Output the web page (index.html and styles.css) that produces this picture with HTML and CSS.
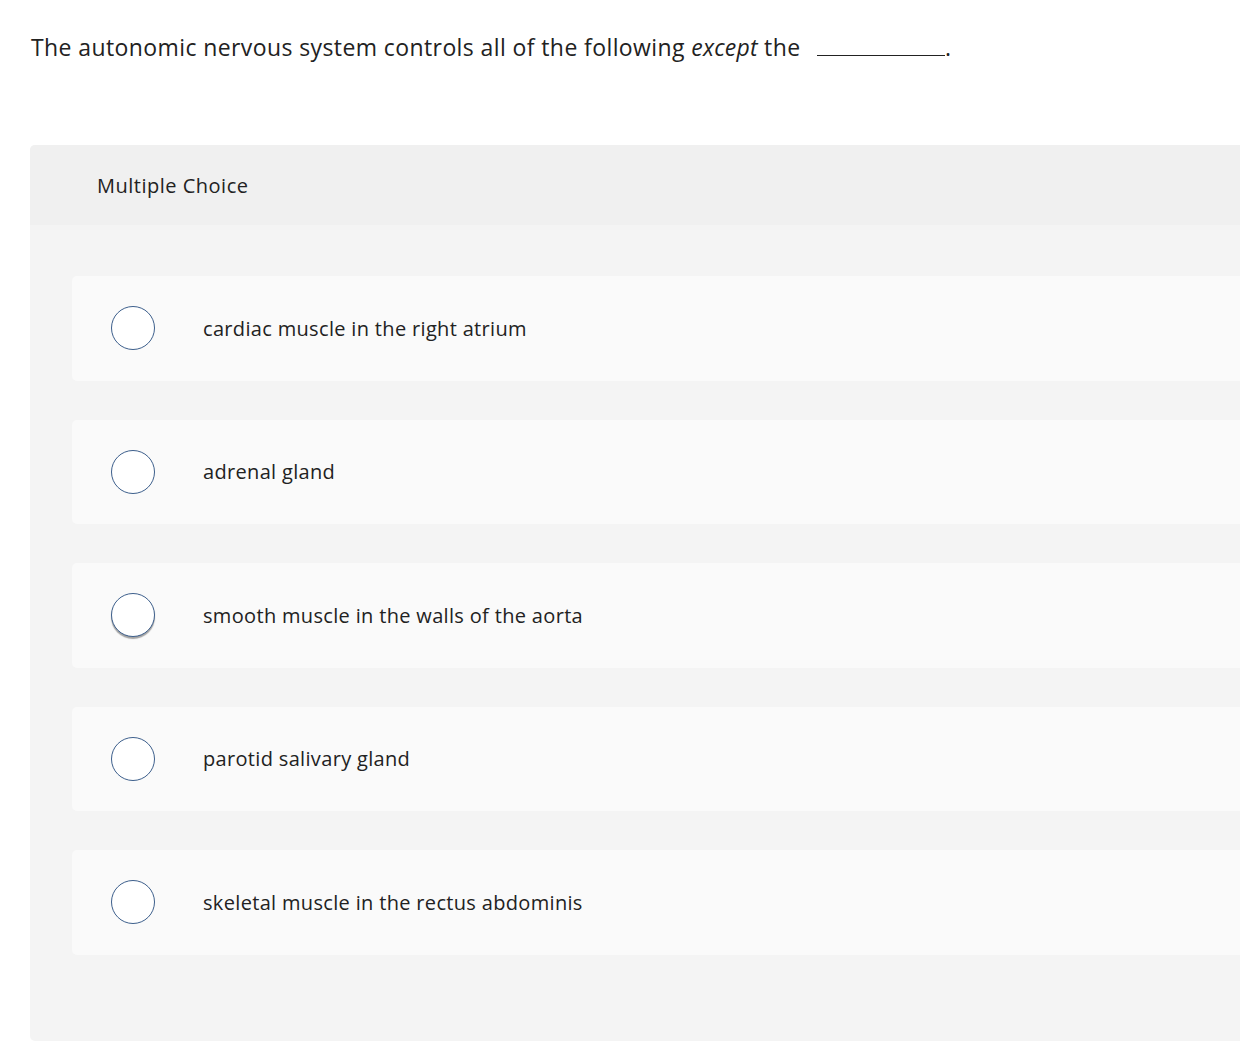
FILE: index.html
```html
<!DOCTYPE html>
<html>

<head>
    <meta charset="UTF-8">
    <meta name="viewport" content="width=device-width, initial-scale=1.0">
    <link rel="stylesheet" href="styles.css">
    <title>Question</title>
</head>

<body>
    <div id="page">
        <p class="question">
            The autonomic nervous system controls all of the following <em>except</em> the <span class="blank"></span>.
        </p>
        <div class="card">
            <div class="card-head">Multiple Choice</div>
            <div class="card-body">
                <label class="option">
                    <span class="radio"></span>
                    <span class="option-text">cardiac muscle in the right atrium</span>
                </label>
                <label class="option">
                    <span class="radio"></span>
                    <span class="option-text">adrenal gland</span>
                </label>
                <label class="option">
                    <span class="radio hover"></span>
                    <span class="option-text">smooth muscle in the walls of the aorta</span>
                </label>
                <label class="option">
                    <span class="radio"></span>
                    <span class="option-text">parotid salivary gland</span>
                </label>
                <label class="option">
                    <span class="radio"></span>
                    <span class="option-text">skeletal muscle in the rectus abdominis</span>
                </label>
            </div>
        </div>
    </div>
</body>

</html>
```

FILE: styles.css
```css
html,
body {
    margin: 0;
    padding: 0;
    background: #fff;
    overflow: hidden;
}

body {
    font-family: "Open Sans", "Liberation Sans", sans-serif;
    color: #222;
}

#page {
    padding: 0 0 0 30px;
    width: 1260px;
}

.question {
    margin: 0;
    padding-top: 30px;
    padding-left: 1px;
    font-size: 23px;
    line-height: 34px;
    letter-spacing: 0.4px;
    height: 115px;
}

.question em {
    font-style: italic;
    letter-spacing: 0.2px;
}

.blank {
    display: inline-block;
    width: 128px;
    margin-left: 10px;
    border-bottom: 1px solid #222;
    vertical-align: baseline;
}

.card {
    border-radius: 5px;
    overflow: hidden;
    background: #f4f4f4;
}

.card-head {
    background: #f0f0f0;
    height: 80px;
    display: flex;
    align-items: center;
    padding-left: 67px;
    font-size: 20px;
    letter-spacing: 0.5px;
}

.card-body {
    padding: 51px 0 86px 42px;
    display: flex;
    flex-direction: column;
    gap: 39px;
}

.option {
    display: flex;
    align-items: center;
    background: #fafafa;
    border-radius: 5px 0 0 5px;
    padding: 30.25px 0 30.25px 39px;
    cursor: pointer;
}

.radio {
    width: 42px;
    height: 42px;
    border: 1.5px solid #3d5f8c;
    border-radius: 50%;
    background: #fff;
    flex-shrink: 0;
}

.radio.hover {
    box-shadow: 0 2px 1px rgba(0, 0, 0, 0.35);
}

.option-text {
    margin-left: 48px;
    font-size: 20px;
    letter-spacing: 0.33px;
}
```
